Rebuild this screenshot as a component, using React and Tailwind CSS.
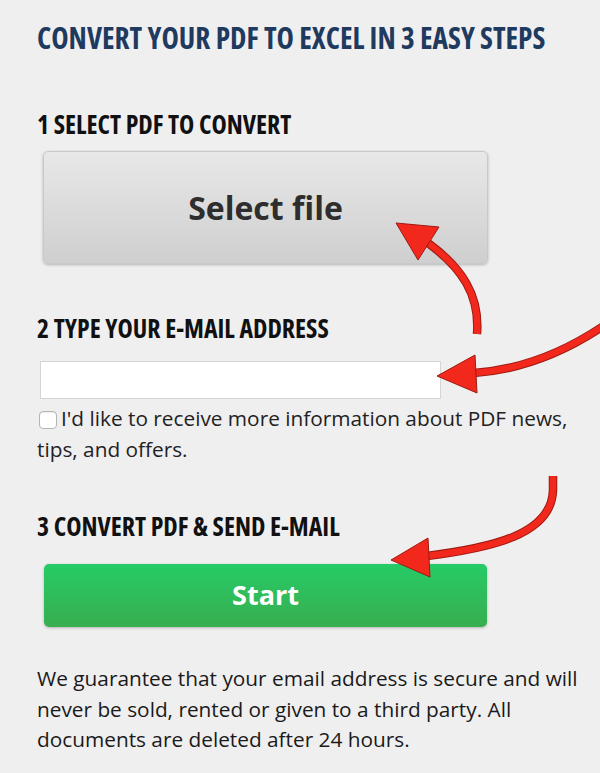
import React from "react";

function Arrows() {
  const red = "#f3281c";
  const dark = "#9e1a12";
  return (
    <svg
      className="absolute inset-0 pointer-events-none"
      width="600"
      height="773"
      viewBox="0 0 600 773"
    >
      {/* arrow 1 */}
      <path d="M477 334 C480 295 462 268 428 243" fill="none" stroke={dark} strokeWidth="8.5" />
      <path d="M477 334 C480 295 462 268 428 243" fill="none" stroke={red} strokeWidth="6.5" />
      <polygon points="396,223 439,227 418,260" fill={red} stroke={dark} strokeWidth="1" strokeLinejoin="round" />
      {/* arrow 2 */}
      <path d="M474 373 Q545 368 612 320" fill="none" stroke={dark} strokeWidth="8.5" />
      <path d="M474 373 Q545 368 612 320" fill="none" stroke={red} strokeWidth="6.5" />
      <polygon points="437,376 475,355 477,393" fill={red} stroke={dark} strokeWidth="1" strokeLinejoin="round" />
      {/* arrow 3 */}
      <path d="M553 476 L553 490 C552 535 490 548 427 556" fill="none" stroke={dark} strokeWidth="8.5" />
      <path d="M553 476 L553 490 C552 535 490 548 427 556" fill="none" stroke={red} strokeWidth="6.5" />
      <polygon points="391,560 428,538 430,577" fill={red} stroke={dark} strokeWidth="1" strokeLinejoin="round" />
    </svg>
  );
}

export default function App() {
  const cond = "font-['Open_Sans',sans-serif] font-bold font-stretch-condensed uppercase";
  return (
    <div className="relative min-h-[773px] w-[600px] overflow-hidden bg-[#f0eff0] font-['Open_Sans',sans-serif] text-[#1a1a1a]">
      <div className="pl-[37px] pr-[12px] pt-[20px]">
        <h1 className={`${cond} text-[29.4px] leading-[36px] text-[#1f3a5f]`}>
          Convert your PDF to Excel in 3 easy steps
        </h1>

        <h2 className={`${cond} mt-[53px] text-[25.8px] leading-[30px] text-[#111]`}>
          1 Select PDF to convert
        </h2>
        <button className="mt-[12px] ml-[6px] flex h-[113px] w-[445px] items-center justify-center rounded-[5px] border border-[#c9c9c9] bg-gradient-to-b from-[#e8e8e8] to-[#cfcfcf] text-[32px] font-bold text-[#2e2e2e] shadow-[0_1px_3px_rgba(0,0,0,0.25)]">
          Select file
        </button>

        <h2 className={`${cond} mt-[49px] text-[25.8px] leading-[30px] text-[#111]`}>
          2 Type your e-mail address
        </h2>
        <input
          type="text"
          className="mt-[18px] ml-[3px] block h-[38px] w-[401px] border border-[#d4d4d4] bg-white"
        />
        <label className="mt-[4px] block text-[20.8px] leading-[31px] text-[#222]">
          <span className="relative top-[3px] ml-[2px] mr-[4px] inline-block h-[18px] w-[18px] rounded-[4px] border border-[#b5b5b5] bg-white shadow-[inset_0_1px_1px_rgba(0,0,0,0.08)]"></span>
          I'd like to receive more information about PDF news, tips, and offers.
        </label>

        <h2 className={`${cond} mt-[46px] text-[25.8px] leading-[30px] text-[#111]`}>
          3 Convert PDF &amp; send e-mail
        </h2>
        <button className="mt-[23px] ml-[7px] flex h-[63px] w-[443px] items-center justify-center rounded-[5px] bg-gradient-to-b from-[#24cb66] to-[#37ae50] text-[27px] font-bold text-white shadow-[0_1px_3px_rgba(0,0,0,0.25)]">
          Start
        </button>

        <p className="mt-[36px] text-[20.8px] leading-[30.5px] text-[#1a1a1a]">
          We guarantee that your email address is secure and will never be sold, rented or given to a third party. All documents are deleted after 24 hours.
        </p>
      </div>
      <Arrows />
    </div>
  );
}
